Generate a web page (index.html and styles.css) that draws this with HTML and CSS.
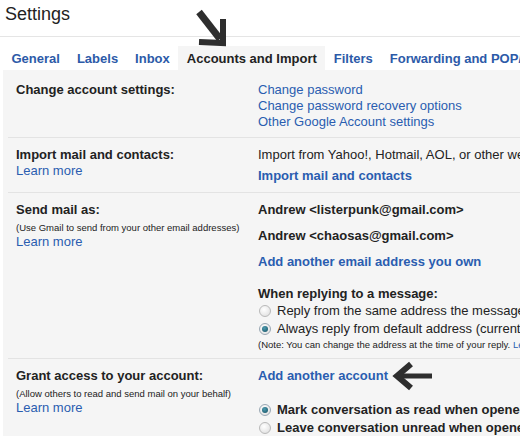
FILE: index.html
```html
<!DOCTYPE html>
<html>
<head>
<meta charset="utf-8">
<link rel="stylesheet" href="styles.css">
</head>
<body>
<div class="page">
  <h1 class="title">Settings</h1>
  <div class="rule"></div>
  <nav class="tabs">
    <a class="tab">General</a>
    <a class="tab">Labels</a>
    <a class="tab">Inbox</a>
    <a class="tab active">Accounts and Import</a>
    <a class="tab">Filters</a>
    <a class="tab">Forwarding and POP/IMAP</a>
  </nav>
  <div class="panel">
    <div class="row first">
      <div class="label"><div class="head">Change account settings:</div></div>
      <div class="value">
        <a class="link">Change password</a>
        <a class="link">Change password recovery options</a>
        <a class="link">Other Google Account settings</a>
      </div>
    </div>
    <div class="row">
      <div class="label">
        <div class="head">Import mail and contacts:</div>
        <a class="link">Learn more</a>
      </div>
      <div class="value">
        <div class="line">Import from Yahoo!, Hotmail, AOL, or other webmail or POP3 accounts.</div>
        <a class="link bold gap5">Import mail and contacts</a>
      </div>
    </div>
    <div class="row send">
      <div class="label">
        <div class="head">Send mail as:</div>
        <div class="small">(Use Gmail to send from your other email addresses)</div>
        <a class="link">Learn more</a>
      </div>
      <div class="value">
        <div class="line bold">Andrew &lt;listerpunk@gmail.com&gt;</div>
        <div class="line bold gap10">Andrew &lt;chaosas@gmail.com&gt;</div>
        <a class="link bold gap10">Add another email address you own</a>
        <div class="line bold gap16">When replying to a message:</div>
        <div class="radio-row"><span class="radio"></span>Reply from the same address the message was sent to</div>
        <div class="radio-row"><span class="radio on"></span>Always reply from default address (currently listerpunk@gmail.com)</div>
        <div class="note">(Note: You can change the address at the time of your reply. <a class="link-inline">Learn more</a>)</div>
      </div>
    </div>
    <div class="row">
      <div class="label">
        <div class="head">Grant access to your account:</div>
        <div class="small">(Allow others to read and send mail on your behalf)</div>
        <a class="link">Learn more</a>
      </div>
      <div class="value">
        <div class="line"><a class="link-inline bold">Add another account</a><svg class="arrow-left" width="40" height="30" viewBox="0 0 40 30"><path d="M40 15 H6" stroke="#2e2e2e" stroke-width="5" fill="none"/><path d="M19 3 L5 15 L19 27" stroke="#2e2e2e" stroke-width="6" fill="none" stroke-linejoin="miter"/></svg></div>
        <div class="radio-row bold gap17"><span class="radio on"></span>Mark conversation as read when opened by others</div>
        <div class="radio-row bold"><span class="radio"></span>Leave conversation unread when opened by others</div>
      </div>
    </div>
  </div>
  <svg class="arrow-down" width="40" height="45" viewBox="0 0 40 45"><path d="M9 7 L30 34" stroke="#2e2e2e" stroke-width="7" fill="none"/><path d="M33 14 L33 38 L9 37" stroke="#2e2e2e" stroke-width="6" fill="none" stroke-linejoin="miter"/></svg>
</div>
</body>
</html>
```
FILE: styles.css
```css
html, body {
  margin: 0;
  padding: 0;
  background: #ffffff;
}
body {
  width: 520px;
  height: 436px;
  overflow: hidden;
  font-family: "Liberation Sans", Arial, sans-serif;
  font-size: 13px;
  color: #222222;
}
.page {
  position: relative;
  width: 520px;
  height: 436px;
  overflow: hidden;
}
.title {
  margin: 0;
  padding: 3px 0 0 5px;
  font-size: 18px;
  line-height: 22px;
  font-weight: normal;
  color: #222222;
}
.rule {
  margin-top: 11px;
  height: 1px;
  background: #e5e5e5;
}
.tabs {
  display: flex;
  margin-top: 9px;
  padding-left: 3px;
  white-space: nowrap;
}
.tab {
  padding: 5px 8.5px 3px;
  line-height: 16px;
  font-weight: bold;
  color: #2c5aa8;
}
.tab.active {
  background: #f5f5f5;
  color: #222222;
}
.panel {
  margin-left: 3px;
  width: 700px;
  height: 400px;
  background: #f5f5f5;
}
.row {
  display: grid;
  grid-template-columns: 242px 1fr;
  margin-left: 5px;
  padding: 9px 0 8px 8px;
  border-top: 1px solid #e3e3e3;
  white-space: nowrap;
  line-height: 16px;
}
.row.first {
  border-top: none;
  padding-top: 12px;
  padding-bottom: 7px;
}
.row.send {
  padding-bottom: 7px;
}
.label, .value {
  display: flex;
  flex-direction: column;
  align-items: flex-start;
}
.head {
  font-weight: bold;
}
.link, .link-inline {
  color: #2a5db0;
}
.link { display: block; }
.bold { font-weight: bold; }
.gap5 { margin-top: 5px; }
.gap10 { margin-top: 10px; }
.gap16 { margin-top: 16px; }
.gap17 { margin-top: 17px; }
.small {
  font-size: 9.5px;
  line-height: 13px;
  margin-top: 3px;
}
.radio-row {
  display: flex;
  align-items: center;
  line-height: 18px;
  padding-left: 1px;
}
.radio {
  box-sizing: border-box;
  width: 12px;
  height: 12px;
  border-radius: 50%;
  border: 1px solid #b9b9b9;
  background: radial-gradient(circle at 40% 35%, #ffffff 0%, #e6e6e6 70%, #d6d6d6 100%);
  margin-right: 6px;
  position: relative;
  flex: none;
}
.radio.on {
  border-color: #9aa8b4;
}
.radio.on::after {
  content: "";
  position: absolute;
  left: 2px;
  top: 2px;
  width: 6px;
  height: 6px;
  border-radius: 50%;
  background: radial-gradient(circle at 40% 35%, #4d9bb0 0%, #1f5e70 80%);
}
.note {
  font-size: 9.5px;
  line-height: 13px;
}
.line {
  display: flex;
  align-items: center;
}
.arrow-left {
  display: block;
  margin-left: 4px;
  margin-top: -7px;
  margin-bottom: -7px;
}
.arrow-down {
  position: absolute;
  left: 190px;
  top: 5px;
}
```
